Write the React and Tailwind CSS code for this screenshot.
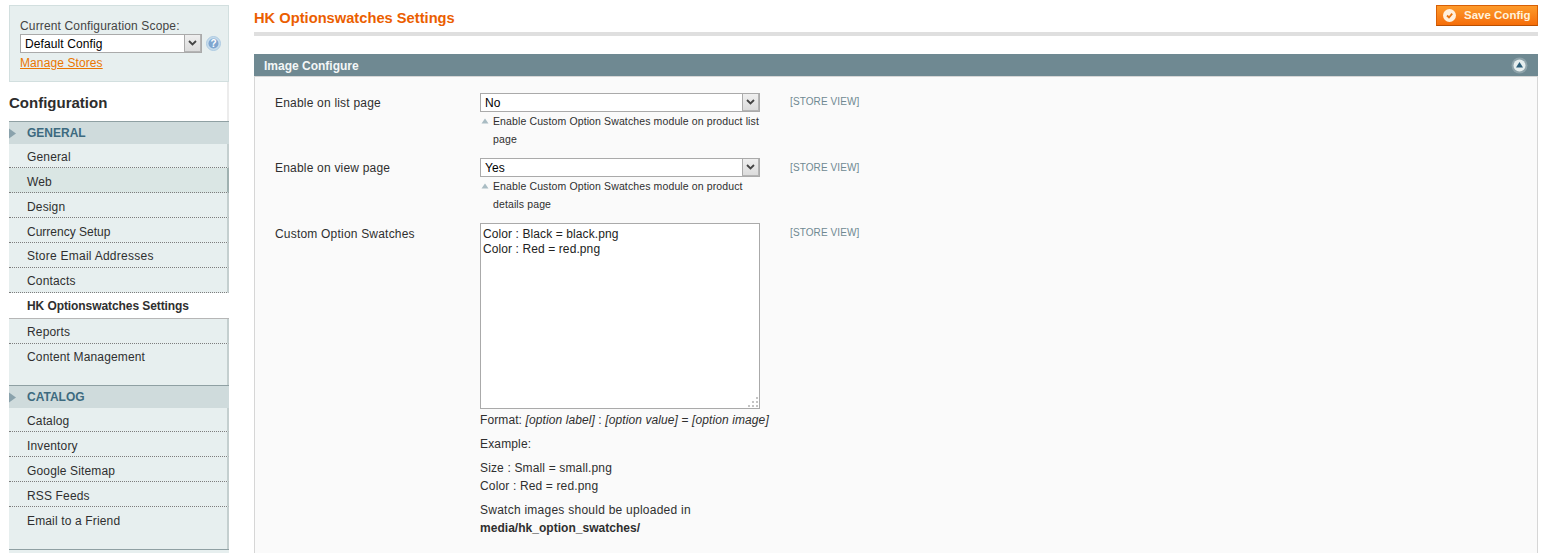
function Arrow() {
  return (
    <svg width="9" height="6" viewBox="0 0 9 6" className="block">
      <path d="M1 1 L4.5 4.5 L8 1" fill="none" stroke="#444" strokeWidth="1.8" />
    </svg>
  );
}
function SelectBox({ value, className }) {
  return (
    <div className={`flex items-stretch border border-[#aaaaaa] bg-white h-[19px] ${className}`}>
      <div className="flex-1 pl-[4px] pt-[1px] text-[12px] leading-[17px] tracking-[0.1px] text-black">{value}</div>
      <div className="w-[17px] border-l border-[#aaaaaa] border-r border-b border-r-[#b4b4b4] border-b-[#b4b4b4] bg-gradient-to-b from-[#efefef] to-[#dcdcdc] flex items-center justify-center">
        <Arrow />
      </div>
    </div>
  );
}
function Row({ label, active, first, last, hovered, high, tracking = "tracking-[0.15px]" }) {
  if (active) {
    return (
      <div className="h-[26px] bg-white border-b border-[#b6b6b6] pl-[18px] pt-[6px] text-[12px] leading-[15px] font-bold tracking-[-0.08px] text-[#2f2f2f]">
        {label}
      </div>
    );
  }
  return (
    <div
      className={`pl-[18px] text-[12px] leading-[15px] ${tracking} text-[#2f2f2f] border-r-2 ${hovered ? "bg-[#dae6e4] border-r-[#9fb1b0]" : "border-r-[#c4cfcf]"} ${first ? "h-[24px] pt-[6px]" : high ? "h-[25px] pt-[6px]" : "h-[25px] pt-[7px]"} ${last ? "" : "border-b border-b-[#7d7d7d] border-dotted"}`}
      style={{ borderRightStyle: "solid" }}
    >
      {label}
    </div>
  );
}
function Header({ label }) {
  return (
    <div className="h-[23px] bg-[#cfdbdc] flex items-center text-[12px] font-bold text-[#3d6a7f] border-t border-[#8fa0a3]">
      <svg width="9" height="11" viewBox="0 0 9 11" className="block shrink-0">
        <path d="M0 0.5 L7 5.5 L0 10.5 Z" fill="#8aa2ac" />
      </svg>
      <span className="ml-[9px]">{label}</span>
    </div>
  );
}
function Field({ label, children, labelPt = "pt-[2px]", scopePt = "pt-[2px]" }) {
  return (
    <div className="flex">
      <div className={`w-[225px] pl-[20px] ${labelPt} text-[12px] leading-[16px] tracking-[0.2px] text-[#2f2f2f]`}>{label}</div>
      <div className="w-[280px]">{children}</div>
      <div className={`ml-[30px] ${scopePt} text-[10px] leading-[14px] tracking-[0.1px] text-[#6f8992]`}>[STORE VIEW]</div>
    </div>
  );
}
function Note({ lines }) {
  return (
    <div className="relative w-[290px] pl-[13px] text-[10.5px] leading-[18px] tracking-[0.12px] text-[#2f2f2f]">
      <svg width="8" height="6" viewBox="0 0 8 6" className="absolute left-[1px] top-[6px]">
        <path d="M4 0.5 L7.5 5.5 L0.5 5.5 Z" fill="#a9bcc3" />
      </svg>
      {lines.map((l) => <div key={l}>{l}</div>)}
    </div>
  );
}
export default function App() {
  return (
    <div className="h-[553px] w-[1544px] overflow-hidden bg-white flex pl-[9px] pr-[6px] font-['Liberation_Sans',Arial,sans-serif]">
      <aside className="w-[220px] shrink-0 pt-[5px]">
        <div className="h-[77px] bg-[#e7efef] border border-[#d2dfdf] pl-[10px] pt-[13px]">
          <div className="text-[12px] leading-[15px] tracking-[0.15px] text-[#444]">Current Configuration Scope:</div>
          <div className="flex items-center">
            <SelectBox value="Default Config" className="w-[182px] shrink-0" />
            <svg width="15" height="15" viewBox="0 0 15 15" className="ml-[4px] shrink-0">
              <circle cx="7.5" cy="7.5" r="7" fill="#c6dcec" stroke="#aecbe2" />
              <circle cx="7.5" cy="7.5" r="5" fill="#7fa6d0" />
              <text x="7.5" y="11" textAnchor="middle" fontSize="10" fontWeight="700" fill="#fff" fontFamily="Liberation Sans">?</text>
            </svg>
          </div>
          <a className="block mt-[3px] text-[12px] leading-[15px] tracking-[0.1px] text-[#ea7601] underline">Manage Stores</a>
        </div>
        <div className="h-[39px] bg-white border-r-2 border-[#ececec] text-[15px] font-bold leading-[18px] text-[#2d2d2d] pt-[12px]">
          Configuration
        </div>
        <Header label="GENERAL" />
        <div className="bg-[#e7efef]">
          <Row label="General" first />
          <Row label="Web" hovered />
          <Row label="Design" />
          <Row label="Currency Setup" tracking="tracking-[0px]" />
          <Row label="Store Email Addresses" high tracking="tracking-[0.25px]" />
          <Row label="Contacts" high />
          <Row label="HK Optionswatches Settings" active />
          <Row label="Reports" high />
          <Row label="Content Management" last high />
          <div className="h-[16px] border-r-2 border-[#c4cfcf]" />
        </div>
        <Header label="CATALOG" />
        <div className="bg-[#e7efef]">
          <Row label="Catalog" first />
          <Row label="Inventory" />
          <Row label="Google Sitemap" />
          <Row label="RSS Feeds" />
          <Row label="Email to a Friend" last />
          <div className="h-[17px] border-r-2 border-[#c4cfcf]" />
        </div>
        <div className="h-[1px] bg-[#8fa0a3]" />
        <div className="h-[4px] bg-[#e7efef]" />
      </aside>
      <main className="ml-[25px] w-[1284px] shrink-0">
        <div className="h-[36px] border-b-4 border-[#dfdfdf] flex justify-between pt-[5px]">
          <h3 className="text-[14.7px] leading-[18px] pt-[4px] font-bold text-[#eb5e00]">HK Optionswatches Settings</h3>
          <button className="h-[21px] w-[102px] border border-[#d85f05] border-b-[#b84f02] bg-gradient-to-b from-[#fd9a2a] to-[#f56d08] flex items-center pl-[6px] text-[11.5px] font-bold text-[#fff2dc]">
            <span className="w-[13px] h-[13px] rounded-full bg-[#fff0dd] flex items-center justify-center">
              <svg width="9" height="9" viewBox="0 0 9 9"><path d="M2 4.5 L4 6.5 L7.2 2.6" fill="none" stroke="#e8740f" strokeWidth="1.8" /></svg>
            </span>
            <span className="ml-[8px]">Save Config</span>
          </button>
        </div>
        <div className="mt-[18px] h-[22px] bg-[#6f8992] flex items-center justify-between pl-[10px] pr-[10px] text-[12px] font-bold text-[#f4f7f7]">
          <span className="pt-[1px]">Image Configure</span>
          <svg width="17" height="17" viewBox="0 0 17 17">
            <circle cx="8.5" cy="8.5" r="8" fill="#8ea3aa" />
            <circle cx="8.5" cy="8.5" r="6" fill="#e6eeee" />
            <path d="M8.5 5 L12 10.5 L5 10.5 Z" fill="#2b5d78" />
          </svg>
        </div>
        <div className="h-[477px] bg-[#fafafa] border-x border-t border-[#d6d6d6] pt-[16px]">
          <Field label="Enable on list page">
            <SelectBox value="No" />
            <Note lines={["Enable Custom Option Swatches module on product list", "page"]} />
          </Field>
          <div className="h-[10px]" />
          <Field label="Enable on view page" scopePt="pt-[3px]">
            <SelectBox value="Yes" />
            <Note lines={["Enable Custom Option Swatches module on product", "details page"]} />
          </Field>
          <div className="h-[10px]" />
          <Field label="Custom Option Swatches" labelPt="pt-[3px]" scopePt="pt-[3px]">
            <div className="relative h-[186px] w-[280px] border border-[#aaaaaa] bg-white px-[2px] pt-[2px] text-[12px] leading-[16px] tracking-[0.1px] text-[#222]">
              <div>Color : Black = black.png</div>
              <div className="-mt-[1px]">Color : Red = red.png</div>
              <svg width="12" height="12" viewBox="0 0 12 12" className="absolute right-0 bottom-0">
                <g fill="#c4c4c4">
                  <rect x="9" y="1" width="2" height="2" /><rect x="5" y="5" width="2" height="2" /><rect x="9" y="5" width="2" height="2" />
                  <rect x="1" y="9" width="2" height="2" /><rect x="5" y="9" width="2" height="2" /><rect x="9" y="9" width="2" height="2" />
                </g>
              </svg>
            </div>
            <div className="whitespace-nowrap text-[12px] leading-[18px] tracking-[0.15px] text-[#2f2f2f] mt-[2px]">
              <div className="tracking-[0.1px]">Format: <i>[option label]</i> : <i>[option value]</i> = <i>[option image]</i></div>
              <div className="mt-[6px]">Example:</div>
              <div className="mt-[6px]">Size : Small = small.png</div>
              <div>Color : Red = red.png</div>
              <div className="mt-[6px] tracking-[0.25px]">Swatch images should be uploaded in</div>
              <div className="font-bold tracking-[0.03px]">media/hk_option_swatches/</div>
            </div>
          </Field>
        </div>
      </main>
    </div>
  );
}
